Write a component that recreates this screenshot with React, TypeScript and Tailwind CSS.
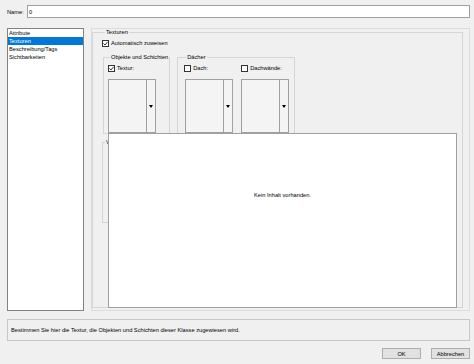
import type { ReactNode } from 'react';

function CheckBox({ checked, label }: { checked?: boolean; label: string }) {
  return (
    <div className="flex h-[8px] items-center gap-[2px] whitespace-nowrap">
      <div className="flex h-[7px] w-[7px] items-center justify-center border border-[#333333] bg-white">
        {checked && (
          <svg width="5" height="5" viewBox="0 0 5 5">
            <path d="M0.5 2.5 L2 4 L4.6 0.8" fill="none" stroke="#222222" strokeWidth="0.9" />
          </svg>
        )}
      </div>
      <span>{label}</span>
    </div>
  );
}

function TexturePicker() {
  return (
    <div className="flex h-[54px] w-[48px] border border-[#a0a0a0] bg-[#f4f4f4]">
      <div className="flex-1" />
      <div className="flex w-[9px] items-center justify-center border-l border-[#a0a0a0]">
        <svg width="4" height="3" viewBox="0 0 4 3">
          <path d="M0 0 H4 L2 3 Z" fill="#000000" />
        </svg>
      </div>
    </div>
  );
}

function GroupBox({ title, className, children }: { title: string; className: string; children?: ReactNode }) {
  return (
    <fieldset className={`border border-[#d5d5d5] ${className}`}>
      <legend className="ml-[2px] whitespace-nowrap px-[1px] leading-[7px]">{title}</legend>
      {children}
    </fieldset>
  );
}

const items = ['Attribute', 'Texturen', 'Beschreibung/Tags', 'Sichtbarkeiten'];

export default function App() {
  return (
    <div
      className="flex h-[364px] w-[474px] flex-col bg-[#f0f0f0] pl-[7px] pr-[4px] pt-[5px] text-[5.7px] leading-[8px] text-black"
      style={{ fontFamily: '"Liberation Sans", Arial, sans-serif' }}
    >
      <div className="flex h-[13px] items-center">
        <span className="w-[20px]">Name:</span>
        <div className="flex h-[13px] flex-1 items-center border border-[#a0a0a0] bg-white pl-[1px]">0</div>
      </div>

      <div className="mt-[10px] flex h-[283px] gap-[7px]">
        <div className="w-[77px] border border-[#828282] bg-white">
          {items.map((item) => (
            <div
              key={item}
              className={`h-[8px] pl-[1px] ${item === 'Texturen' ? 'bg-[#0078d7] text-white' : ''}`}
            >
              {item}
            </div>
          ))}
        </div>

        <div className="relative flex-1 border border-[#dcdcdc] pb-[2px] pr-[6px]">
          <fieldset className="h-full border border-[#d5d5d5] pl-[9px]">
            <legend className="ml-[3px] px-[1px] leading-[7px]">Texturen</legend>
            <div className="mt-[3px]">
              <CheckBox checked label="Automatisch zuweisen" />
            </div>
            <div className="ml-[1px] mt-[7px] flex gap-[7px]">
              <GroupBox title="Objekte und Schichten" className="h-[80px] w-[66px] pl-[4px]">
                <div className="mt-[3px]">
                  <CheckBox checked label="Textur:" />
                </div>
                <div className="mt-[7px]">
                  <TexturePicker />
                </div>
              </GroupBox>
              <GroupBox title="Dächer" className="h-[80px] w-[118px] pl-[6px]">
                <div className="mt-[3px] flex">
                  <div className="w-[57px]">
                    <CheckBox label="Dach:" />
                  </div>
                  <CheckBox label="Dachwände:" />
                </div>
                <div className="mt-[7px] flex gap-[8px] pl-[1px]">
                  <TexturePicker />
                  <TexturePicker />
                </div>
              </GroupBox>
            </div>
            <GroupBox title="Vorschau" className="mt-[5px] h-[84px] w-[192px]" />
          </fieldset>

          <div className="absolute left-[16px] top-[104px] flex h-[175px] w-[349px] justify-center border border-[#a0a0a0] bg-white pt-[57px]">
            Kein Inhalt vorhanden.
          </div>
        </div>
      </div>

      <div className="mt-[8px] flex h-[22px] items-center border border-[#c8c8c8] pl-[3px]">
        Bestimmen Sie hier die Textur, die Objekten und Schichten dieser Klasse zugewiesen wird.
      </div>

      <div className="mt-[7px] flex justify-end gap-[10px]">
        <button className="flex h-[11px] w-[39px] items-center justify-center border border-[#adadad] bg-[#e1e1e1]">
          OK
        </button>
        <button className="flex h-[11px] w-[39px] items-center justify-center border border-[#adadad] bg-[#e1e1e1]">
          Abbrechen
        </button>
      </div>
    </div>
  );
}
